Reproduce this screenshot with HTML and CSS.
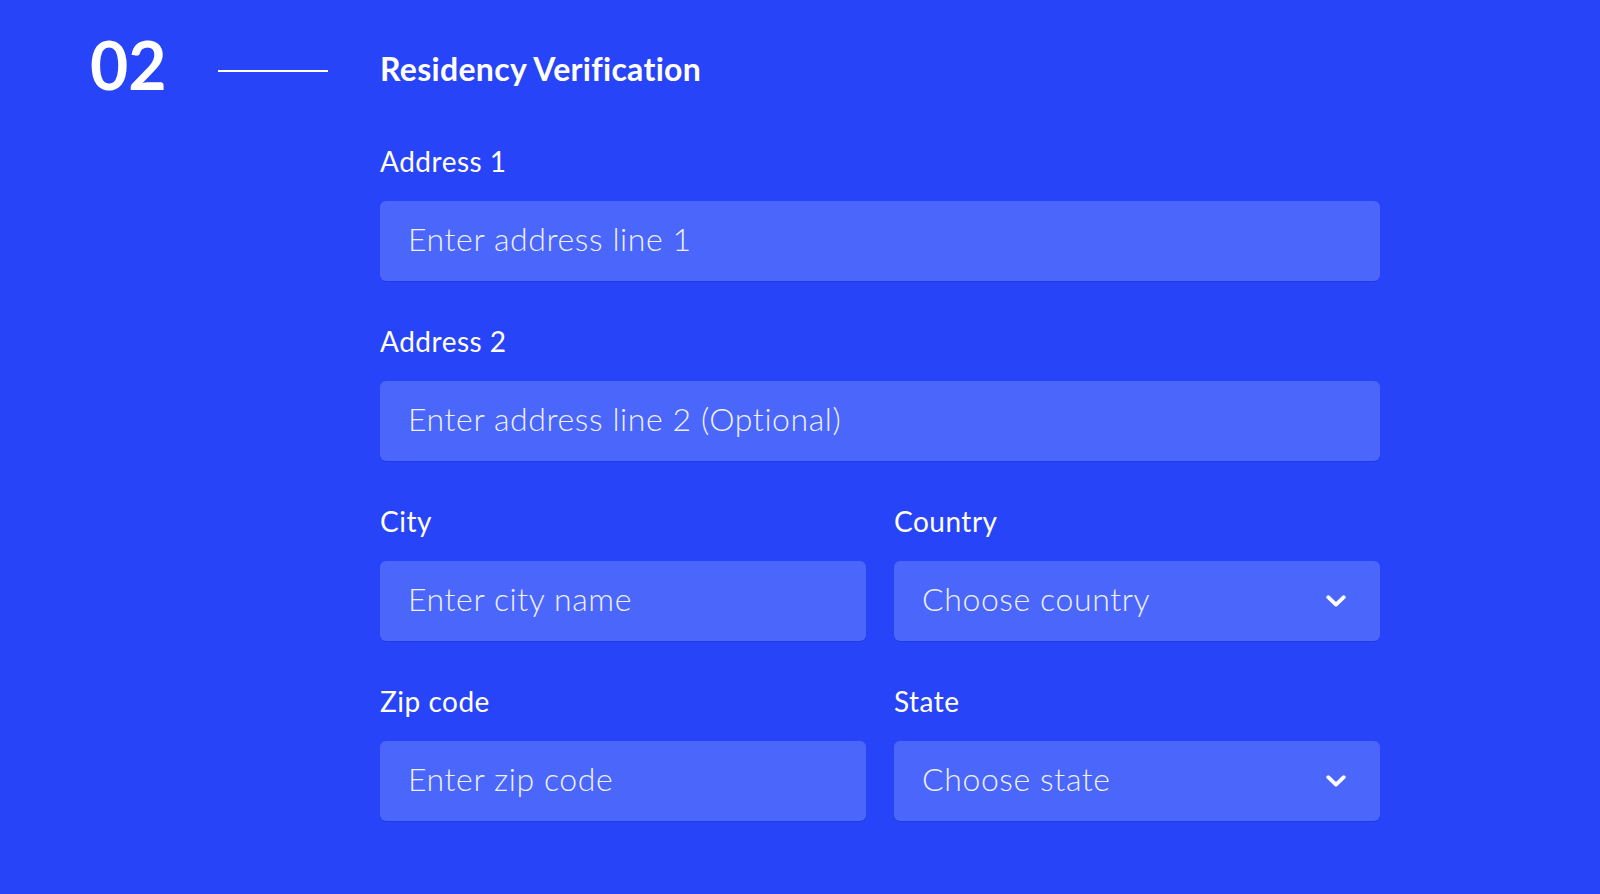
FILE: index.html
```html
<!DOCTYPE html>
<html lang="en">
<head>
    <meta charset="UTF-8">
    <meta name="viewport" content="width=device-width, initial-scale=1.0">
    <title>Residency Verification</title>
    <link rel="stylesheet" href="styles.css">
</head>
<body>
    <!-- Step header -->
    <header class="step-header">
        <div class="step-number">02</div>
        <span class="step-line"></span>
        <h1 class="step-title">Residency Verification</h1>
    </header>

    <!-- Address form -->
    <form class="address-form">
        <div class="field">
            <label class="field-label" for="address1">Address 1</label>
            <input class="field-input" id="address1" type="text" placeholder="Enter address line 1">
        </div>

        <div class="field">
            <label class="field-label" for="address2">Address 2</label>
            <input class="field-input" id="address2" type="text" placeholder="Enter address line 2 (Optional)">
        </div>

        <div class="field-row">
            <div class="field">
                <label class="field-label" for="city">City</label>
                <input class="field-input" id="city" type="text" placeholder="Enter city name">
            </div>
            <div class="field">
                <span class="field-label">Country</span>
                <div class="field-input field-select" tabindex="0">
                    <span>Choose country</span>
                    <svg class="chevron" width="20" height="12" viewBox="0 0 20 12">
                        <path d="M2.2 2.2 L10 9.6 L17.8 2.2" fill="none" stroke="#fff" stroke-width="3.8" stroke-linecap="round" stroke-linejoin="round"/>
                    </svg>
                </div>
            </div>
        </div>

        <div class="field-row">
            <div class="field">
                <label class="field-label" for="zip">Zip code</label>
                <input class="field-input" id="zip" type="text" placeholder="Enter zip code">
            </div>
            <div class="field">
                <span class="field-label">State</span>
                <div class="field-input field-select" tabindex="0">
                    <span>Choose state</span>
                    <svg class="chevron" width="20" height="12" viewBox="0 0 20 12">
                        <path d="M2.2 2.2 L10 9.6 L17.8 2.2" fill="none" stroke="#fff" stroke-width="3.8" stroke-linecap="round" stroke-linejoin="round"/>
                    </svg>
                </div>
            </div>
        </div>
    </form>
</body>
</html>
```

FILE: styles.css
```css
/* Reset */
* {
    margin: 0;
    padding: 0;
    box-sizing: border-box;
}

body {
    font-family: Lato, "Open Sans", sans-serif;
    background: #2744f9;
    color: #fff;
    min-height: 100vh;
    padding: 31px 0 0 90px;
}

/* Header: step number, rule, title */
.step-header {
    display: flex;
    align-items: center;
    height: 68px;
}

.step-number {
    width: 128px;
    font-size: 66px;
    font-weight: 700;
    line-height: 68px;
}

.step-line {
    width: 110px;
    height: 2px;
    margin: 12px 52px 0 0;
    background: #fff;
}

.step-title {
    font-size: 32px;
    font-weight: 700;
    letter-spacing: 0.3px;
    line-height: 40px;
    margin-top: 8px;
}

/* Form */
.address-form {
    width: 1000px;
    margin: 45px 0 0 290px;
    display: flex;
    flex-direction: column;
    gap: 43px;
}

.field {
    display: flex;
    flex-direction: column;
    flex: 1;
}

.field-row {
    display: flex;
    gap: 28px;
}

.field-label {
    font-size: 28px;
    letter-spacing: 0.5px;
    line-height: 34px;
    margin-bottom: 23px;
}

.field-input {
    height: 80px;
    width: 100%;
    padding: 0 28px 6px;
    border: none;
    border-radius: 6px;
    background: #4b66fb;
    box-shadow: 0 1px 0 rgba(20, 40, 200, 0.35);
    font-family: inherit;
    font-size: 32px;
    font-weight: 300;
    letter-spacing: 0.6px;
    color: #fff;
    outline: none;
}

.field-input::placeholder {
    color: #eef1ff;
    opacity: 1;
}

.field-select {
    display: flex;
    align-items: center;
    justify-content: space-between;
    padding-right: 34px;
    color: #eef1ff;
    cursor: pointer;
}

.chevron {
    margin-top: 6px;
}
```
